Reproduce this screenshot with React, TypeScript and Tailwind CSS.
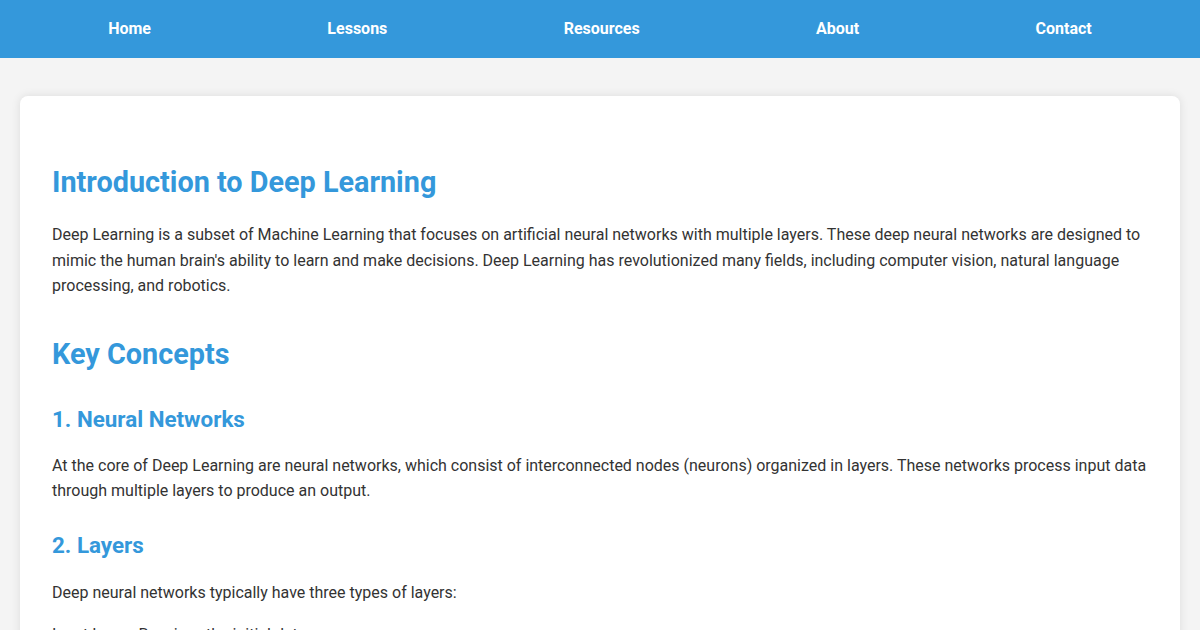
import React from 'react';

const navItems = ['Home', 'Lessons', 'Resources', 'About', 'Contact'];

const App: React.FC = () => {
  return (
    <div className="min-h-screen bg-[#f4f4f4] text-[#333] leading-[1.6]" style={{ fontFamily: 'Roboto, sans-serif' }}>
      <nav className="bg-[#3498db] h-[58px] px-5 flex items-center justify-around">
        {navItems.map((item) => (
          <a key={item} href="#" className="text-white font-bold text-base">
            {item}
          </a>
        ))}
      </nav>

      <main className="px-5 pt-[38px]">
        <div className="bg-white rounded-lg shadow-[0_0_10px_rgba(0,0,0,0.1)] px-8 pt-[63px] pb-8">
          <h1 className="text-[#3498db] font-bold text-[28.8px] leading-[1.6]">Introduction to Deep Learning</h1>
          <p className="mt-[17px]">
            Deep Learning is a subset of Machine Learning that focuses on artificial neural networks with multiple layers. These deep neural networks are designed to mimic the human brain's ability to learn and make decisions. Deep Learning has revolutionized many fields, including computer vision, natural language processing, and robotics.
          </p>

          <h2 className="text-[#3498db] font-bold text-[28.8px] leading-[1.6] mt-8">Key Concepts</h2>

          <h3 className="text-[#3498db] font-bold text-[22.4px] leading-[1.6] mt-[25px]">1. Neural Networks</h3>
          <p className="mt-[15px]">
            At the core of Deep Learning are neural networks, which consist of interconnected nodes (neurons) organized in layers. These networks process input data through multiple layers to produce an output.
          </p>

          <h3 className="text-[#3498db] font-bold text-[22.4px] leading-[1.6] mt-6">2. Layers</h3>
          <p className="mt-4">Deep neural networks typically have three types of layers:</p>
          <ul className="mt-[17px]">
            <li>Input Layer: Receives the initial data</li>
            <li>Hidden Layers: Process the data through various transformations</li>
            <li>Output Layer: Produces the final result</li>
          </ul>
        </div>
      </main>
    </div>
  );
};

export default App;
